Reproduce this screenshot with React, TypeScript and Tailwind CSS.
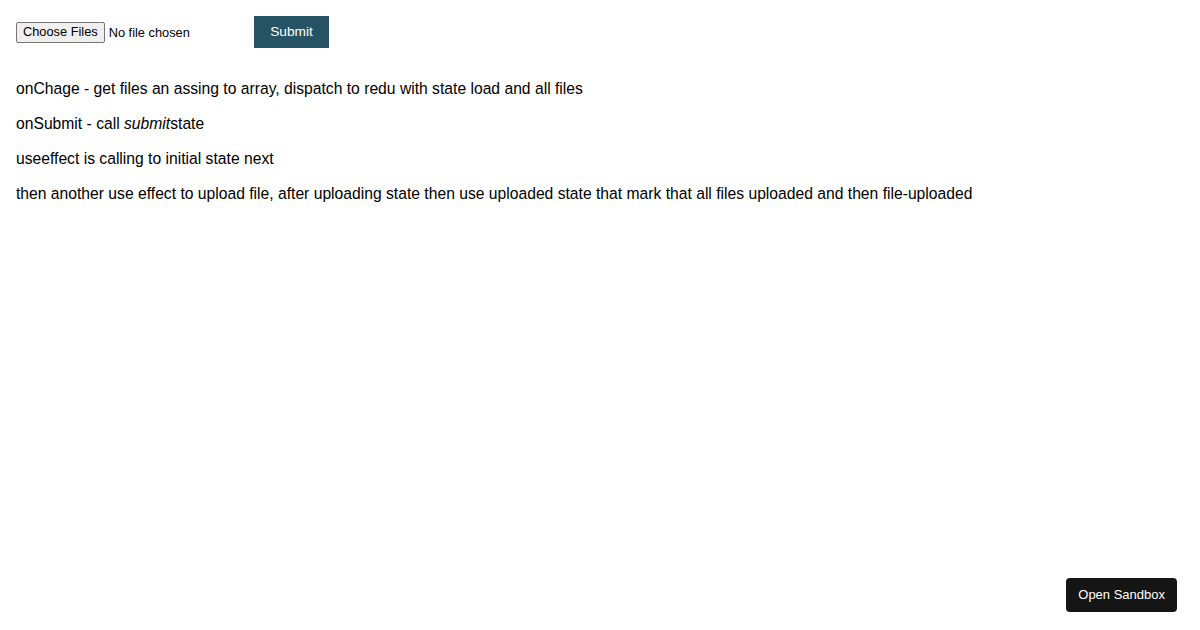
import React from "react";

export default function App() {
  return (
    <div className="min-h-screen bg-white text-black p-4 font-['Liberation_Sans',Arial,sans-serif] text-[15.68px]">
      <form className="flex items-center" onSubmit={(e) => e.preventDefault()}>
        <input
          type="file"
          multiple
          className="w-[238px] text-[12.8px] leading-[16px] text-black file:mr-[4px] file:border file:border-solid file:border-[#767676] file:bg-[#efefef] file:rounded-[2px] file:px-[6px] file:py-[1px] file:h-[21px] file:text-[12.8px] file:text-black"
        />
        <button
          type="submit"
          className="h-8 w-[75px] bg-[#255364] text-white text-[13.7px]"
        >
          Submit
        </button>
      </form>
      <div className="mt-[31px]">
        <p className="leading-[19px] my-4">
          onChage - get files an assing to array, dispatch to redu with state load and all files
        </p>
        <p className="leading-[19px] my-4">
          onSubmit - call <i>submit</i>state
        </p>
        <p className="leading-[19px] my-4">useeffect is calling to initial state next</p>
        <p className="leading-[19px] my-4">
          then another use effect to upload file, after uploading state then use uploaded state that mark that all files uploaded and then file-uploaded
        </p>
      </div>
      <button className="fixed right-[23px] bottom-[18px] h-[34px] px-[12px] rounded-[4px] bg-[#151515] text-white text-[13px] font-['Liberation_Sans',Arial,sans-serif]">
        Open Sandbox
      </button>
    </div>
  );
}
